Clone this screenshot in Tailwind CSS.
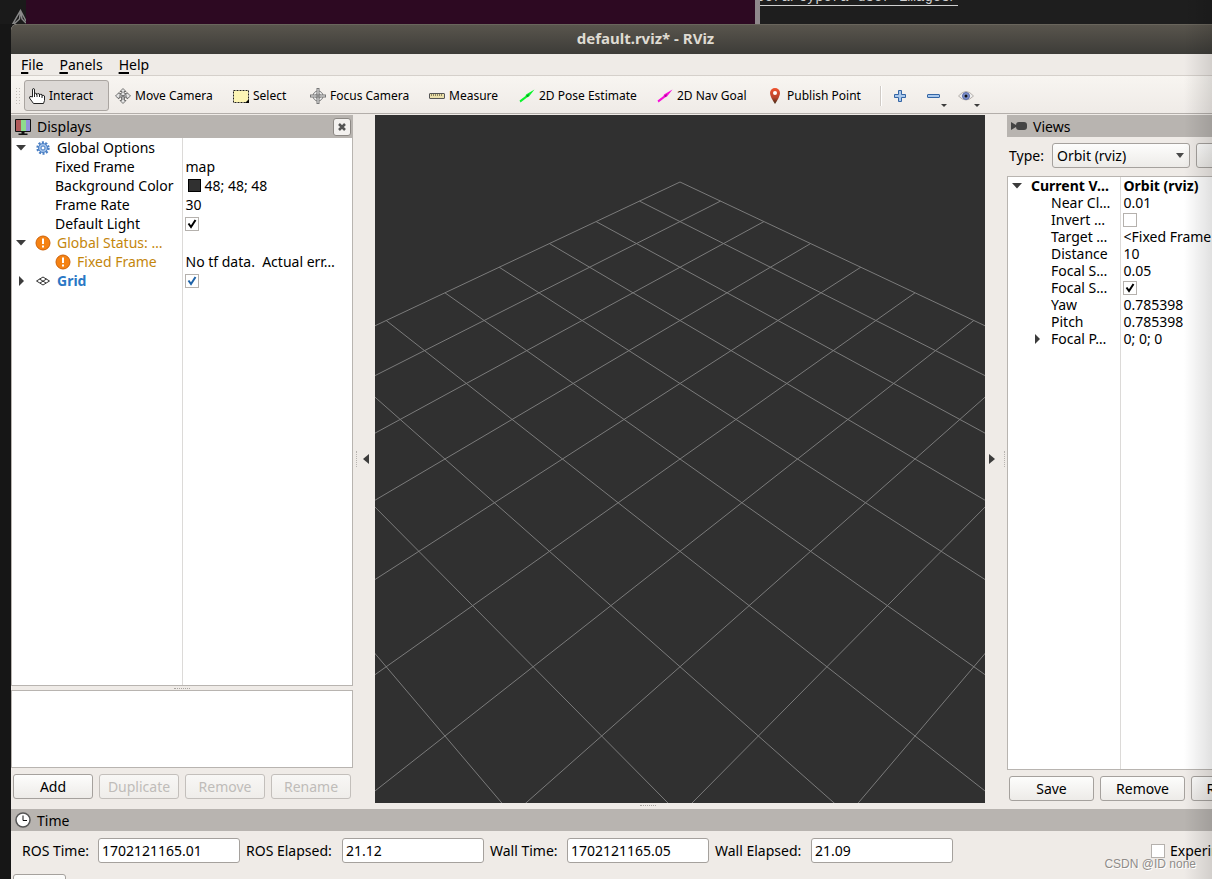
<!DOCTYPE html>
<html lang="en">
<head>
    <meta charset="UTF-8">
    <meta name="viewport" content="width=device-width, initial-scale=1.0">
    <title>default.rviz* - RViz</title>
    <script src="https://cdn.jsdelivr.net/npm/@tailwindcss/browser@4"></script>
</head>
<body class="relative flex h-screen flex-col overflow-hidden bg-[#161616] font-['Noto_Sans',sans-serif] text-sm leading-[19px] text-black">
    <!-- Desktop behind the window -->
    <div class="flex h-6 shrink-0 overflow-hidden">
        <div class="flex w-[26px] shrink-0 items-end justify-end bg-[#1a1a1a]">
            <svg class="h-[15px] w-4" viewBox="0 0 16 15" fill="none" stroke="#8a8a8a" stroke-width="1.5">
                <path d="M1 18L10.500 1.500L16 12M10.500 2L9.500 10L4 15M10.500 2L12 10L16 14"/>
            </svg>
        </div>
        <div class="w-[729px] shrink-0 bg-[#2d0922]"></div>
        <div class="w-[5px] shrink-0 bg-[#8f888c]"></div>
        <div class="flex-1 bg-[#1e1e1e]">
            <p class="-mt-[11px] flex h-[17px] w-[198px] justify-end overflow-hidden border-b border-[#d0d0d0] font-['Liberation_Mono',monospace] text-sm leading-4 whitespace-pre text-[#d0d0d0]">pora/typora-user-images/</p>
        </div>
    </div>

    <!-- RViz window -->
    <div class="ml-[11px] flex min-h-0 flex-1 flex-col overflow-hidden rounded-tl-md bg-[#efebe7]">
        <header class="flex h-[30px] shrink-0 items-center justify-center border-t border-[#69655c] bg-linear-to-b from-[#59554d] to-[#3d3c38] pr-2 pb-[2px] pl-19">
            <h1 class="text-[15px] font-bold text-[#dfdbd2]">default.rviz* - RViz</h1>
        </header>

        <nav class="flex h-[22px] shrink-0 items-center gap-4 border-b border-[#d5d0cb] px-[10px]">
            <a href="#"><span class="underline decoration-2 underline-offset-2">F</span>ile</a>
            <a href="#"><span class="underline decoration-2 underline-offset-2">P</span>anels</a>
            <a href="#"><span class="underline decoration-2 underline-offset-2">H</span>elp</a>
        </nav>

        <!-- Tools -->
        <div class="flex h-[38px] shrink-0 items-center border-b border-[#b3aeaa] bg-linear-to-b from-[#f8f5f1] to-[#efebe7] pt-[2px] pl-1 text-xs">
            <svg class="mr-[3px] h-[18px] w-[6px]" viewBox="0 0 6 18" stroke="#c3beb9" stroke-dasharray="1 2">
                <path d="M1.500 1V18M4.500 1V18"/>
            </svg>
            <button class="flex h-[31px] w-[85px] items-center gap-1 rounded-[3px] border border-[#aaa5a1] bg-[#dcd8d5] pl-1">
                <svg class="size-4 shrink-0" viewBox="0 0 16 16" fill="#fff" stroke="#222" stroke-linejoin="round">
                    <path d="M3.500 9V2Q3.500 .5 4.500 .5T5.500 2V6Q6 4.500 7.500 5.500V7Q8.500 4.500 10.500 6V7.500Q11 5.500 13 6.500V8Q14 6.500 15.500 8V12.500L14.500 15.500H4.500L.5 10Q.5 8 2 8.500Z"/>
                    <path d="M5.500 6V9M8 7V9M10.500 7V9M13 8V10" fill="none"/>
                </svg>
                Interact
            </button>
            <button class="flex h-[31px] w-[119px] items-center gap-1 pl-[6px]">
                <svg class="size-4 shrink-0" viewBox="0 0 16 16" fill="#e4e4e4" stroke="#555" stroke-width=".8">
                    <path d="M8 .5L11 3.500H9V5L12 6V4.500L15.500 8L12 11V9.500L9.500 9V12.500H11L8 15.500L5 12.500H6.500V9L4 9.500V11L.5 8L4 4.500V6L7 5V3.500H5Z"/>
                    <path d="M5 6L8 8L11 6M8 8V12M4 8H12" fill="none"/>
                </svg>
                Move Camera
            </button>
            <button class="flex h-[31px] w-[77px] items-center gap-1 pl-[5px]">
                <svg class="size-4 shrink-0" viewBox="0 0 16 16">
                    <path d="M.5 2.500H15.500V14.500H.5Z" fill="#fdf5b5" stroke="#222" stroke-dasharray="2 1"/>
                    <path d="M12 15L16 11V15Z" fill="#000"/>
                </svg>
                Select
            </button>
            <button class="flex h-[31px] w-[119px] items-center gap-1 pl-[5px]">
                <svg class="size-4 shrink-0" viewBox="0 0 16 16" fill="none" stroke="#777">
                    <circle cx="8" cy="8" r="5" fill="#f3f3f3"/>
                    <circle cx="8" cy="8" r="2.500"/>
                    <path d="M8 0V16M0 8H16" stroke-width="3"/>
                    <path d="M8 1V15M1 8H15" stroke="#eee"/>
                    <path d="M6 8H10M8 6V10"/>
                </svg>
                Focus Camera
            </button>
            <button class="flex h-[31px] w-[90px] items-center gap-1 pl-[5px]">
                <svg class="size-4 shrink-0" viewBox="0 0 16 16">
                    <rect x=".5" y="5.500" width="15" height="5" rx=".5" fill="#eadfaa" stroke="#555"/>
                    <path d="M2.500 6V8M4.500 6V8M6.500 6V8M8.500 6V8M10.500 6V8M12.500 6V8" stroke="#8d8560"/>
                </svg>
                Measure
            </button>
            <button class="flex h-[31px] w-[138px] items-center gap-1 pl-[5px]">
                <svg class="size-4 shrink-0" viewBox="0 0 16 16">
                    <path d="M.5 12.500L6.500 8L7 6.500L15.500 1.500L10 8.500L8 9.500L1.500 14.500Z" fill="#0cf52c"/>
                    <path d="M7 8L10 6L9 9Z" fill="#0a8a20"/>
                </svg>
                2D Pose Estimate
            </button>
            <button class="flex h-[31px] w-[110px] items-center gap-1 pl-[5px]">
                <svg class="size-4 shrink-0" viewBox="0 0 16 16">
                    <path d="M.5 12.500L6.500 8L7 6.500L15.500 1.500L10 8.500L8 9.500L1.500 14.500Z" fill="#f80fd8"/>
                    <path d="M7 8L10 6L9 9Z" fill="#a0088c"/>
                </svg>
                2D Nav Goal
            </button>
            <button class="flex h-[31px] w-[118px] items-center gap-1 pl-[5px]">
                <svg class="size-4 shrink-0" viewBox="0 0 16 16">
                    <defs>
                        <linearGradient id="pin" x1="0" y1="0" x2="0" y2="1">
                            <stop offset="0" stop-color="#f0532e"/>
                            <stop offset=".6" stop-color="#b8432b"/>
                            <stop offset="1" stop-color="#3d2a14"/>
                        </linearGradient>
                    </defs>
                    <path d="M8 16Q3 8.500 3 5A5 5 0 0 1 13 5Q13 8.500 8 16Z" fill="url(#pin)"/>
                    <circle cx="8" cy="5" r="2" fill="#fff"/>
                </svg>
                Publish Point
            </button>
            <div class="h-5 w-[2px] border-r border-white bg-[#d0cbc6]"></div>
            <button class="ml-[10px] size-4" aria-label="Add tool">
                <svg class="size-4" viewBox="0 0 16 16">
                    <path d="M6.500 2.500H9.500V6.500H13.500V9.500H9.500V13.500H6.500V9.500H2.500V6.500H6.500Z" fill="#a9c8ec" stroke="#3465a4" stroke-linejoin="round"/>
                </svg>
            </button>
            <button class="ml-4 flex w-6 items-end" aria-label="Remove tool">
                <svg class="h-6 w-6" viewBox="0 0 24 24">
                    <rect x="3.500" y="10.500" width="12" height="3" rx=".5" fill="#a9c8ec" stroke="#3465a4"/>
                    <path d="M17 20H23L20 23Z" fill="#3c3c3c"/>
                </svg>
            </button>
            <button class="ml-[10px] flex w-6 items-end" aria-label="Tool names">
                <svg class="h-6 w-6" viewBox="0 0 24 24">
                    <path d="M.5 12Q8 3 15.500 12Q8 20 .5 12Z" fill="#eee" stroke="#b5b0aa"/>
                    <circle cx="8" cy="12" r="3.500" fill="#7f93cf" stroke="#5b6ca8"/>
                    <circle cx="8" cy="12" r="1.500" fill="#111"/>
                    <path d="M16 20H22L19 23Z" fill="#3c3c3c"/>
                </svg>
            </button>
        </div>

        <!-- Docks and 3D view -->
        <main class="flex min-h-0 flex-1 pt-px">
            <section class="flex w-[342px] shrink-0 flex-col pb-[10px]">
                <div class="flex h-[23px] shrink-0 items-center gap-[6px] bg-[#b8b4b0] pr-[2px] pl-1">
                    <svg class="size-4 shrink-0" viewBox="0 0 16 16">
                        <path d="M1 1H6V12H1Z" fill="#b05a5a"/>
                        <path d="M6 1H11V12H6Z" fill="#8edc8e"/>
                        <path d="M11 1H15V12H11Z" fill="#9292dc"/>
                        <path d="M.5 .5H15.500V12.500H.5Z" fill="none" stroke="#111"/>
                        <path d="M6.500 13H9.500V14.500H12.500V16H3.500V14.500H6.500Z" fill="#111"/>
                    </svg>
                    <h2 class="flex-1">Displays</h2>
                    <button class="flex size-[18px] items-center justify-center rounded-[3px] border border-[#8c8884] bg-[#f3f1ef]" aria-label="Close Displays">
                        <svg class="size-2" viewBox="0 0 8 8" stroke="#555" stroke-width="2.500">
                            <path d="M1 1L7 7M7 1L1 7"/>
                        </svg>
                    </button>
                </div>
                <div class="min-h-0 flex-1 border border-t-0 border-[#b8b4b0] bg-white">
                    <table class="h-full w-full table-fixed border-collapse whitespace-nowrap">
                        <colgroup>
                            <col class="w-[170px]">
                            <col>
                        </colgroup>
                        <tbody>
                            <tr class="h-[19px]">
                                <td class="p-0"><div class="flex items-center pl-1">
                                    <svg class="mr-[10px] size-[10px]" viewBox="0 0 10 10" fill="#3c3c3c"><path d="M0 2H10L5 7.500Z"/></svg>
                                    <svg class="mr-[7px] size-[14px]" viewBox="0 0 14 14" fill="none" stroke="#4a7fc4">
                                        <circle cx="7" cy="7" r="5.500" stroke-width="2.400" stroke-dasharray="2 1.450"/>
                                        <circle cx="7" cy="7" r="4.500" fill="#9fc0ea"/>
                                        <circle cx="7" cy="7" r="2" fill="#fff"/>
                                    </svg>
                                    Global Options
                                </div></td>
                                <td class="border-l border-[#dcdad8] p-0"></td>
                            </tr>
                            <tr class="h-[19px]">
                                <td class="p-0 pl-[43px]">Fixed Frame</td>
                                <td class="border-l border-[#dcdad8] p-0 pl-[3px]">map</td>
                            </tr>
                            <tr class="h-[19px]">
                                <td class="p-0 pl-[43px]">Background Color</td>
                                <td class="border-l border-[#dcdad8] p-0 pl-[5px]"><div class="flex items-center gap-1"><span class="size-[13px] border border-black bg-[#303030]"></span>48; 48; 48</div></td>
                            </tr>
                            <tr class="h-[19px]">
                                <td class="p-0 pl-[43px]">Frame Rate</td>
                                <td class="border-l border-[#dcdad8] p-0 pl-[3px]">30</td>
                            </tr>
                            <tr class="h-[19px]">
                                <td class="p-0 pl-[43px]"><label for="defaultLight">Default Light</label></td>
                                <td class="border-l border-[#dcdad8] p-0 pl-[2px]"><div class="relative size-[14px]">
                                    <input type="checkbox" id="defaultLight" checked class="block size-[14px] appearance-none border border-[#b5b1ad] bg-white">
                                    <svg class="pointer-events-none absolute inset-0 size-[14px]" viewBox="0 0 14 14" fill="none" stroke="#000" stroke-width="2"><path d="M3.500 6.500L6 10L10.500 3"/></svg>
                                </div></td>
                            </tr>
                            <tr class="h-[19px] text-[#c4860c]">
                                <td class="p-0"><div class="flex items-center pl-1">
                                    <svg class="mr-[9px] size-[10px]" viewBox="0 0 10 10" fill="#3c3c3c"><path d="M0 2H10L5 7.500Z"/></svg>
                                    <svg class="mr-[6px] size-4" viewBox="0 0 16 16"><circle cx="8" cy="8" r="7" fill="#f58213" stroke="#cf6207"/><path d="M8 3.500V9M8 10.500V12.500" stroke="#fff" stroke-width="2"/></svg>
                                    Global Status: …
                                </div></td>
                                <td class="border-l border-[#dcdad8] p-0"></td>
                            </tr>
                            <tr class="h-[19px]">
                                <td class="p-0 text-[#c4860c]"><div class="flex items-center gap-[6px] pl-[43px]">
                                    <svg class="size-4" viewBox="0 0 16 16"><circle cx="8" cy="8" r="7" fill="#f58213" stroke="#cf6207"/><path d="M8 3.500V9M8 10.500V12.500" stroke="#fff" stroke-width="2"/></svg>
                                    Fixed Frame
                                </div></td>
                                <td class="border-l border-[#dcdad8] p-0 pl-[3px] whitespace-pre">No tf data.  Actual err…</td>
                            </tr>
                            <tr class="h-[19px]">
                                <td class="p-0"><div class="flex items-center pl-1">
                                    <svg class="mr-[9px] size-[10px]" viewBox="0 0 10 10" fill="#3c3c3c"><path d="M3 0V10L8 5Z"/></svg>
                                    <svg class="mr-[6px] size-4" viewBox="0 0 16 16" fill="none" stroke="#333"><path d="M1.500 8L8 4L14.500 8L8 12ZM4.500 6L11 10M11.500 6L5 10"/></svg>
                                    <label for="gridOn" class="font-bold text-[#2a78c5]">Grid</label>
                                </div></td>
                                <td class="border-l border-[#dcdad8] p-0 pl-[2px]"><div class="relative size-[14px]">
                                    <input type="checkbox" id="gridOn" checked class="block size-[14px] appearance-none border border-[#b5b1ad] bg-white">
                                    <svg class="pointer-events-none absolute inset-0 size-[14px]" viewBox="0 0 14 14" fill="none" stroke="#1f63a8" stroke-width="2"><path d="M3.500 6.500L6 10L10.500 3"/></svg>
                                </div></td>
                            </tr>
                            <tr class="h-full">
                                <td class="p-0"></td>
                                <td class="border-l border-[#dcdad8] p-0"></td>
                            </tr>
                        </tbody>
                    </table>
                </div>
                <div class="flex h-1 shrink-0 items-center justify-center">
                    <div class="w-4 border-t border-dotted border-[#a9a5a1]"></div>
                </div>
                <div class="h-[78px] shrink-0 border border-[#b8b4b0] bg-white"></div>
                <div class="mt-[6px] flex shrink-0 gap-[6px] px-[2px]">
                    <button class="h-[25px] flex-1 rounded-[3px] border border-[#a5a19d] bg-linear-to-b from-[#fdfdfc] to-[#edebe8]">Add</button>
                    <button disabled class="h-[25px] flex-1 rounded-[3px] border border-[#c3bfbb] bg-linear-to-b from-[#f8f7f5] to-[#efedea] text-[#bfbcb9]">Duplicate</button>
                    <button disabled class="h-[25px] flex-1 rounded-[3px] border border-[#c3bfbb] bg-linear-to-b from-[#f8f7f5] to-[#efedea] text-[#bfbcb9]">Remove</button>
                    <button disabled class="h-[25px] flex-1 rounded-[3px] border border-[#c3bfbb] bg-linear-to-b from-[#f8f7f5] to-[#efedea] text-[#bfbcb9]">Rename</button>
                </div>
            </section>

            <div class="flex w-[22px] shrink-0 items-center justify-between pr-[6px] pb-[6px] pl-[3px]">
                <div class="h-4 border-l border-dotted border-[#b8b4b0]"></div>
                <svg class="h-[10px] w-[6px]" viewBox="0 0 6 10" fill="#3c3c3c"><path d="M6 0V10L0 5Z"/></svg>
            </div>

            <div class="flex min-w-0 flex-1 flex-col">
                <svg class="min-h-0 w-full flex-1 bg-[#303030]" viewBox="0 0 610 688" preserveAspectRatio="xMidYMid slice" stroke="#7b7b7b">
                    <g id="grid"></g>
                </svg>
                <div class="flex h-[6px] shrink-0 items-start justify-center pt-[2px] pr-16">
                    <div class="w-4 border-t border-dotted border-[#a9a5a1]"></div>
                </div>
            </div>

            <div class="flex w-[22px] shrink-0 items-center justify-between pr-[2px] pb-[6px] pl-1">
                <svg class="h-[10px] w-[6px]" viewBox="0 0 6 10" fill="#3c3c3c"><path d="M0 0V10L6 5Z"/></svg>
                <div class="h-4 border-l border-dotted border-[#b8b4b0]"></div>
            </div>

            <section class="flex w-[205px] shrink-0 flex-col overflow-hidden pb-2">
                <div class="flex h-[22px] shrink-0 items-center gap-[6px] bg-[#b8b4b0] pl-1">
                    <svg class="size-4 shrink-0" viewBox="0 0 16 16" fill="#444"><path d="M0 4L5 7V9L0 12Z"/><rect x="5" y="4" width="11" height="8" rx="3"/></svg>
                    <h2>Views</h2>
                </div>
                <div class="flex h-[39px] shrink-0 items-center gap-[6px] pb-[2px] pl-[2px]">
                    <label for="viewType" class="w-[37px] shrink-0">Type:</label>
                    <div class="relative w-[138px] shrink-0">
                        <select id="viewType" class="block h-[25px] w-full appearance-none rounded-[3px] border border-[#a5a19d] bg-linear-to-b from-[#fdfdfc] to-[#edebe8] pl-1">
                            <option>Orbit (rviz)</option>
                        </select>
                        <svg class="pointer-events-none absolute top-[10px] right-[6px] h-[5px] w-2" viewBox="0 0 8 5" fill="#4a4a4a"><path d="M0 0H8L4 5Z"/></svg>
                    </div>
                    <button class="h-[25px] w-20 shrink-0 rounded-[3px] border border-[#a5a19d] bg-linear-to-b from-[#fdfdfc] to-[#edebe8]" aria-label="Zero"></button>
                </div>
                <div class="min-h-0 flex-1 border border-r-0 border-[#b8b4b0] bg-white">
                    <table class="h-full w-full table-fixed border-collapse leading-[17px] whitespace-nowrap">
                        <colgroup>
                            <col class="w-[112px]">
                            <col>
                        </colgroup>
                        <tbody>
                            <tr class="h-[17px] font-bold">
                                <td class="p-0"><div class="flex items-center gap-[9px] pl-1">
                                    <svg class="size-[10px]" viewBox="0 0 10 10" fill="#3c3c3c"><path d="M0 2H10L5 7.500Z"/></svg>
                                    Current V…
                                </div></td>
                                <td class="border-l border-[#dcdad8] p-0 pl-[3px]">Orbit (rviz)</td>
                            </tr>
                            <tr class="h-[17px]">
                                <td class="p-0 pl-[43px]">Near Cl…</td>
                                <td class="border-l border-[#dcdad8] p-0 pl-[3px]">0.01</td>
                            </tr>
                            <tr class="h-[17px]">
                                <td class="p-0 pl-[43px]"><label for="invertZ">Invert …</label></td>
                                <td class="border-l border-[#dcdad8] p-0 pl-[2px]"><input type="checkbox" id="invertZ" class="block size-[14px] appearance-none border border-[#b5b1ad] bg-white"></td>
                            </tr>
                            <tr class="h-[17px]">
                                <td class="p-0 pl-[43px]">Target …</td>
                                <td class="border-l border-[#dcdad8] p-0 pl-[3px]">&lt;Fixed Frame</td>
                            </tr>
                            <tr class="h-[17px]">
                                <td class="p-0 pl-[43px]">Distance</td>
                                <td class="border-l border-[#dcdad8] p-0 pl-[3px]">10</td>
                            </tr>
                            <tr class="h-[17px]">
                                <td class="p-0 pl-[43px]">Focal S…</td>
                                <td class="border-l border-[#dcdad8] p-0 pl-[3px]">0.05</td>
                            </tr>
                            <tr class="h-[17px]">
                                <td class="p-0 pl-[43px]"><label for="focalFixed">Focal S…</label></td>
                                <td class="border-l border-[#dcdad8] p-0 pl-[2px]"><div class="relative size-[14px]">
                                    <input type="checkbox" id="focalFixed" checked class="block size-[14px] appearance-none border border-[#b5b1ad] bg-white">
                                    <svg class="pointer-events-none absolute inset-0 size-[14px]" viewBox="0 0 14 14" fill="none" stroke="#000" stroke-width="2"><path d="M3.500 6.500L6 10L10.500 3"/></svg>
                                </div></td>
                            </tr>
                            <tr class="h-[17px]">
                                <td class="p-0 pl-[43px]">Yaw</td>
                                <td class="border-l border-[#dcdad8] p-0 pl-[3px]">0.785398</td>
                            </tr>
                            <tr class="h-[17px]">
                                <td class="p-0 pl-[43px]">Pitch</td>
                                <td class="border-l border-[#dcdad8] p-0 pl-[3px]">0.785398</td>
                            </tr>
                            <tr class="h-[17px]">
                                <td class="p-0"><div class="flex items-center gap-[9px] pl-6">
                                    <svg class="size-[10px]" viewBox="0 0 10 10" fill="#3c3c3c"><path d="M3 0V10L8 5Z"/></svg>
                                    Focal P…
                                </div></td>
                                <td class="border-l border-[#dcdad8] p-0 pl-[3px]">0; 0; 0</td>
                            </tr>
                            <tr class="h-full">
                                <td class="p-0"></td>
                                <td class="border-l border-[#dcdad8] p-0"></td>
                            </tr>
                        </tbody>
                    </table>
                </div>
                <div class="mt-[6px] flex shrink-0 gap-[6px] pl-[2px]">
                    <button class="h-[25px] w-[85px] shrink-0 rounded-[3px] border border-[#a5a19d] bg-linear-to-b from-[#fdfdfc] to-[#edebe8]">Save</button>
                    <button class="h-[25px] w-[85px] shrink-0 rounded-[3px] border border-[#a5a19d] bg-linear-to-b from-[#fdfdfc] to-[#edebe8]">Remove</button>
                    <button class="h-[25px] w-[85px] shrink-0 rounded-[3px] border border-[#a5a19d] bg-linear-to-b from-[#fdfdfc] to-[#edebe8]">Rename</button>
                </div>
            </section>
        </main>

        <!-- Time panel -->
        <section class="h-[70px] shrink-0 overflow-hidden">
            <div class="flex h-[22px] items-center gap-[6px] bg-[#b8b4b0] pl-1">
                <svg class="size-4" viewBox="0 0 16 16" fill="none"><circle cx="8" cy="8" r="7" fill="#fff" stroke="#555" stroke-width="1.500"/><path d="M8 3.500V8.500H12" stroke="#111"/></svg>
                <h2>Time</h2>
            </div>
            <div class="flex h-[39px] items-center gap-[6px] pl-[11px] whitespace-nowrap">
                <label for="rosTime" class="w-[70px] shrink-0">ROS Time:</label>
                <input type="text" id="rosTime" value="1702121165.01" class="h-[25px] w-[142px] shrink-0 rounded-[3px] border border-[#a5a19d] bg-white px-[3px]">
                <label for="rosElapsed" class="w-[90px] shrink-0">ROS Elapsed:</label>
                <input type="text" id="rosElapsed" value="21.12" class="h-[25px] w-[142px] shrink-0 rounded-[3px] border border-[#a5a19d] bg-white px-[3px]">
                <label for="wallTime" class="w-[71px] shrink-0">Wall Time:</label>
                <input type="text" id="wallTime" value="1702121165.05" class="h-[25px] w-[142px] shrink-0 rounded-[3px] border border-[#a5a19d] bg-white px-[3px]">
                <label for="wallElapsed" class="w-[90px] shrink-0">Wall Elapsed:</label>
                <input type="text" id="wallElapsed" value="21.09" class="h-[25px] w-[142px] shrink-0 rounded-[3px] border border-[#a5a19d] bg-white px-[3px]">
                <div class="ml-auto flex w-[61px] shrink-0 items-center gap-[5px] overflow-hidden">
                    <input type="checkbox" id="experimental" class="size-[14px] shrink-0 appearance-none border border-[#b5b1ad] bg-white">
                    <label for="experimental">Experimental</label>
                </div>
            </div>
            <button class="mt-1 ml-[2px] h-[25px] w-[53px] rounded-[3px] border border-[#a5a19d] bg-linear-to-b from-[#fdfdfc] to-[#edebe8]">Reset</button>
        </section>
    </div>

    <!-- Shade at the screen edge -->
    <div class="pointer-events-none absolute inset-y-0 right-0 w-7 bg-linear-to-r from-transparent to-black/12"></div>
    <p class="absolute right-4 bottom-[7px] font-['Liberation_Sans',sans-serif] text-xs leading-4 text-[#8f8c89] text-shadow-[1px_1px_0_#fff]">CSDN @ID none</p>

    <script>
        // Orbit camera: distance 10, yaw and pitch 45 degrees
        const FOCAL = 831;
        const CENTER = { x: 305, y: 344 };

        function project(i, j) {
            const depth = 10 - (i + j) / 2;
            return {
                x: CENTER.x + FOCAL * (i - j) * Math.SQRT1_2 / depth,
                y: CENTER.y + FOCAL * (i + j) / 2 / depth
            };
        }

        function addLine(from, to) {
            const line = document.createElementNS('http://www.w3.org/2000/svg', 'line');
            line.setAttribute('x1', from.x);
            line.setAttribute('y1', from.y);
            line.setAttribute('x2', to.x);
            line.setAttribute('y2', to.y);
            document.getElementById('grid').appendChild(line);
        }

        for (let n = -5; n <= 5; n++) {
            addLine(project(n, -5), project(n, 5));
            addLine(project(-5, n), project(5, n));
        }
    </script>
</body>
</html>
